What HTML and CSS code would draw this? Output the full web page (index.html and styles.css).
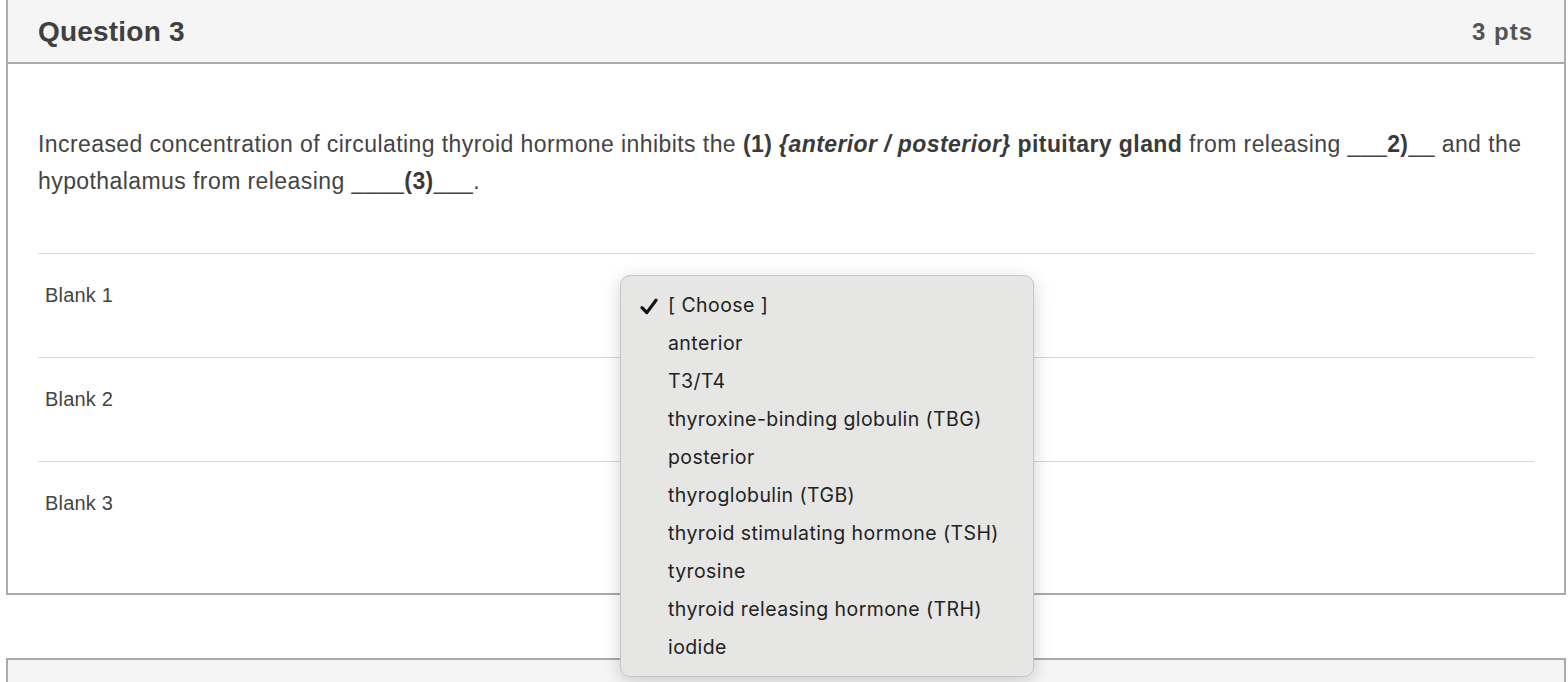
FILE: index.html
```html
<!DOCTYPE html>
<html>
<head>
<meta charset="utf-8">
<link rel="stylesheet" href="styles.css">
</head>
<body>
<div class="page">
  <div class="card">
    <div class="card-header">
      <h2 class="title">Question 3</h2>
      <span class="pts">3 pts</span>
    </div>
    <div class="card-body">
      <p class="question">Increased concentration of circulating thyroid hormone inhibits the <b>(1) <i>{anterior / posterior}</i> pituitary gland</b> from releasing ___<b>2)</b>__ and the hypothalamus from releasing ____<b>(3)</b>___.</p>
      <div class="blanks">
        <div class="blank-row">Blank 1</div>
        <div class="blank-row">Blank 2</div>
        <div class="blank-row">Blank 3</div>
      </div>
    </div>
  </div>
  <div class="card next">
    <div class="card-header"></div>
  </div>

  <div class="popup">
    <div class="opt selected"><svg class="check" width="18" height="17" viewBox="0 0 18 17"><path d="M2 9.6 L6.8 14.6 L16 2.2" fill="none" stroke="#111" stroke-width="3.2" stroke-linecap="round" stroke-linejoin="round"/></svg>[ Choose ]</div>
    <div class="opt">anterior</div>
    <div class="opt">T3/T4</div>
    <div class="opt">thyroxine-binding globulin (TBG)</div>
    <div class="opt">posterior</div>
    <div class="opt">thyroglobulin (TGB)</div>
    <div class="opt">thyroid stimulating hormone (TSH)</div>
    <div class="opt">tyrosine</div>
    <div class="opt">thyroid releasing hormone (TRH)</div>
    <div class="opt">iodide</div>
  </div>
</div>
</body>
</html>
```

FILE: styles.css
```css
html, body {
  margin: 0;
  padding: 0;
  background: #ffffff;
  font-family: "Liberation Sans", Arial, sans-serif;
  color: #444444;
}

.page {
  position: relative;
  width: 1568px;
  height: 682px;
  overflow: hidden;
}

.card {
  box-sizing: border-box;
  width: 1560px;
  margin-left: 6px;
  margin-top: -2px;
  border: 2px solid #ababab;
  background: #ffffff;
}

.card.next {
  margin-top: 63px;
  height: 60px;
}

.card-header {
  box-sizing: border-box;
  height: 64px;
  padding: 2px 31px 0 30px;
  background: #f5f5f5;
  border-bottom: 2px solid #ababab;
  display: flex;
  align-items: center;
  justify-content: space-between;
}

.card.next .card-header {
  border-bottom: none;
}

.title {
  margin: 0;
  font-size: 28px;
  letter-spacing: 0.2px;
  font-weight: bold;
  color: #404040;
}

.pts {
  font-size: 24px;
  letter-spacing: 1px;
  font-weight: bold;
  color: #555555;
}

.card-body {
  padding: 62px 30px 28px 30px;
}

.question {
  margin: 0 0 53px 0;
  font-size: 23px;
  letter-spacing: 0.42px;
  line-height: 37px;
  color: #444444;
}

.question b {
  color: #3a3a3a;
}

.blank-row {
  box-sizing: border-box;
  height: 104px;
  border-top: 1px solid #d6d6d6;
  padding: 29px 0 0 7px;
  font-size: 20px;
  letter-spacing: 0.2px;
  line-height: 24px;
  color: #444444;
}

.popup {
  position: absolute;
  left: 620px;
  top: 275px;
  width: 414px;
  box-sizing: border-box;
  padding: 10px 0 10px 0;
  background: #e6e6e5;
  border: 1px solid #c6c6c6;
  border-radius: 10px;
  box-shadow: 0 4px 18px rgba(0, 0, 0, 0.18);
  font-family: Inter, "Noto Sans", sans-serif;
  font-size: 19.5px;
  letter-spacing: 0.42px;
  color: #222222;
  z-index: 10;
}

.opt {
  position: relative;
  height: 38px;
  line-height: 38px;
  padding-left: 47px;
  white-space: nowrap;
}

.check {
  position: absolute;
  left: 19px;
  top: 12px;
}
```
